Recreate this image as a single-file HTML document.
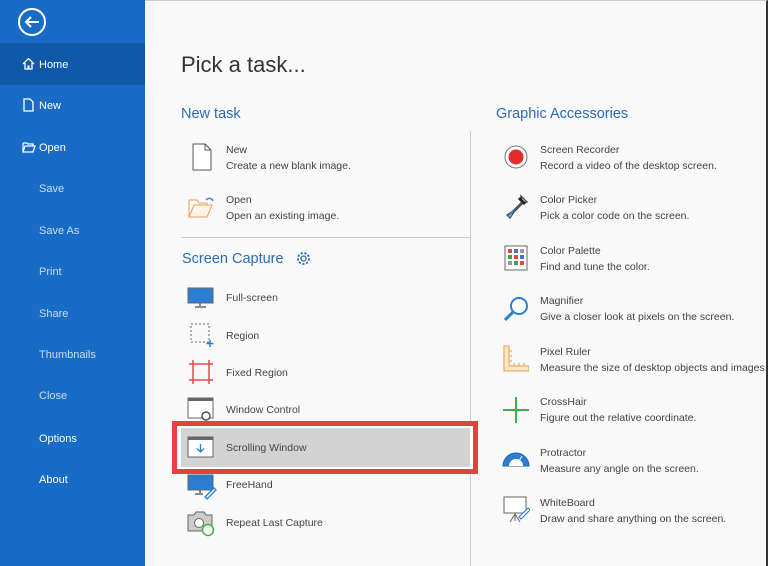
<!DOCTYPE html>
<html><head><style>
*{margin:0;padding:0;box-sizing:border-box}
body{width:768px;height:566px;overflow:hidden;background:#fff;font-family:"Liberation Sans",sans-serif;position:relative}
.side{position:absolute;left:0;top:0;width:145px;height:566px;background:#196cc6;color:#fff}
.side .it{position:absolute;left:39px;font-size:11px;color:#fff}
.side .dim{color:#c8dcf2}
.main{position:absolute;left:145px;top:0;width:623px;height:566px;background:#f9f9f9;border-top:1px solid #ccc;border-right:2px solid #333}
.t{position:absolute;font-size:10.5px;color:#444;white-space:nowrap}
.h{position:absolute;font-size:14.5px;color:#2b6cb3}
.ic{position:absolute}
</style></head><body>
<div class="side">
<svg class="ic" style="left:17px;top:7px" width="30" height="30"><circle cx="15" cy="15" r="13" fill="none" stroke="#fff" stroke-width="2"/><path d="M22 15H9M14 10l-5 5 5 5" fill="none" stroke="#fff" stroke-width="2"/></svg>
<div style="position:absolute;left:0;top:43px;width:145px;height:42px;background:#0f59a8"></div>
<svg class="ic" style="left:22px;top:57px" width="13" height="13"><path d="M1 7L6.5 1.5 12 7M3 6v6h3V9h1v3h3V6" fill="none" stroke="#fff" stroke-width="1.3"/></svg>
<div class="it" style="top:59px">Home</div>
<svg class="ic" style="left:23px;top:98px" width="11" height="14"><path d="M1 1h6l3 3v9H1z" fill="none" stroke="#fff" stroke-width="1.3"/></svg>
<div class="it" style="top:100px">New</div>
<svg class="ic" style="left:22px;top:141px" width="14" height="12"><path d="M1 2h4l1 1h5v2M1 2v9h10l2-6H3L1 11" fill="none" stroke="#fff" stroke-width="1.2"/></svg>
<div class="it" style="top:142px">Open</div>
<div class="it dim" style="top:183px">Save</div>
<div class="it dim" style="top:225px">Save As</div>
<div class="it dim" style="top:266px">Print</div>
<div class="it dim" style="top:308px">Share</div>
<div class="it dim" style="top:349px">Thumbnails</div>
<div class="it dim" style="top:390px">Close</div>
<div class="it" style="top:433px">Options</div>
<div class="it" style="top:474px">About</div>
</div>
<div class="main"></div>
<div class="t" style="left:181px;top:52px;font-size:22px;color:#333">Pick a task...</div>
<div class="h" style="left:181px;top:106px">New task</div>
<div class="h" style="left:496px;top:106px">Graphic Accessories</div>
<div style="position:absolute;left:470px;top:131px;width:1px;height:435px;background:#ccc"></div>
<div style="position:absolute;left:181px;top:237px;width:289px;height:1px;background:#ccc"></div>
<svg class="ic" style="left:192px;top:143px" width="20" height="28"><path d="M1 1h12l6 6v20H1z M13 1v6h6" fill="#fff" stroke="#555"/></svg>
<div class="t" style="left:226px;top:144px">New</div><div class="t" style="left:226px;top:160px">Create a new blank image.</div>
<svg class="ic" style="left:187px;top:194px" width="28" height="26"><path d="M2 6h8l2 3h8v2M2 6v17h18l5-12H7L2 23" fill="#fdf3e8" stroke="#e8a060"/><path d="M19 6a4 4 0 0 1 7 1" fill="none" stroke="#3a8ad8" stroke-width="1.5"/></svg>
<div class="t" style="left:226px;top:194px">Open</div><div class="t" style="left:226px;top:210px">Open an existing image.</div>
<div class="h" style="left:182px;top:251px">Screen Capture</div>
<svg class="ic" style="left:296px;top:251px" width="15" height="15"><circle cx="7.5" cy="7.5" r="2.5" fill="none" stroke="#2b6cb3" stroke-width="1.3"/><circle cx="7.5" cy="7.5" r="5.5" fill="none" stroke="#2b6cb3" stroke-width="1.8" stroke-dasharray="2.2 1.6"/></svg>
<svg class="ic" style="left:187px;top:287px" width="28" height="22"><rect x="1" y="1" width="25" height="15" fill="#2a7dd0" stroke="#666"/><path d="M13 16v3M8 20h11" stroke="#666" stroke-width="1.5"/></svg>
<div class="t" style="left:226px;top:292px">Full-screen</div>
<svg class="ic" style="left:189px;top:322px" width="26" height="26"><rect x="2" y="2" width="18" height="18" fill="none" stroke="#666" stroke-dasharray="2 2"/><path d="M21 18v7M17.5 21.5h7" stroke="#2a7dd0" stroke-width="1.5"/></svg>
<div class="t" style="left:226px;top:330px">Region</div>
<svg class="ic" style="left:188px;top:359px" width="26" height="26"><path d="M5 1v24M21 1v24M1 5h24M1 21h24" stroke="#e24a4a" stroke-width="1.5"/></svg>
<div class="t" style="left:226px;top:367px">Fixed Region</div>
<svg class="ic" style="left:187px;top:397px" width="28" height="26"><rect x="1" y="1" width="25" height="20" fill="#fff" stroke="#666"/><rect x="1" y="1" width="25" height="3" fill="#666"/><circle cx="19" cy="19" r="4" fill="#fff" stroke="#555" stroke-width="1.5"/></svg>
<div class="t" style="left:226px;top:404px">Window Control</div>
<div style="position:absolute;left:172px;top:421px;width:306px;height:53px;border:5px solid #e84040;background:#fff"></div>
<div style="position:absolute;left:181px;top:428px;width:289px;height:39px;background:#d4d3d3"></div>
<svg class="ic" style="left:187px;top:436px" width="28" height="24"><rect x="1" y="1" width="25" height="20" fill="#fff" stroke="#666"/><rect x="1" y="1" width="25" height="3" fill="#666"/><path d="M13.5 8v8M10 12.5l3.5 3.5 3.5-3.5" fill="none" stroke="#2a7dd0" stroke-width="1.3"/></svg>
<div class="t" style="left:226px;top:442px">Scrolling Window</div>
<svg class="ic" style="left:187px;top:474px" width="30" height="26"><rect x="1" y="1" width="25" height="15" fill="#2a7dd0" stroke="#666"/><path d="M13 16v3M8 20h8" stroke="#666" stroke-width="1.5"/><path d="M18 23l9-9 2 2-9 9z" fill="#fff" stroke="#2a7dd0" stroke-width="1.3"/></svg>
<div class="t" style="left:226px;top:479px">FreeHand</div>
<svg class="ic" style="left:187px;top:509px" width="30" height="28"><path d="M1 6h6l2-3h8l2 3h6v16H1z" fill="#ccc" stroke="#666"/><circle cx="12" cy="14" r="4.5" fill="#fff" stroke="#666"/><circle cx="21" cy="21" r="5.5" fill="#fff" stroke="#3cb050" stroke-width="1.5"/></svg>
<div class="t" style="left:226px;top:517px">Repeat Last Capture</div>

<svg class="ic" style="left:503px;top:144px" width="26" height="26"><circle cx="13" cy="13" r="11" fill="#fff" stroke="#777"/><circle cx="13" cy="13" r="7.5" fill="#e52b2b"/></svg>
<div class="t" style="left:540px;top:144px">Screen Recorder</div><div class="t" style="left:540px;top:160px">Record a video of the desktop screen.</div>
<svg class="ic" style="left:503px;top:194px" width="26" height="28"><path d="M18 2l6 6-4 1-9 9-4 6-3-3 6-4 9-9z" fill="#fff" stroke="#444" stroke-width="1.3"/><path d="M16 4l6 6" stroke="#222" stroke-width="3"/><path d="M5 22l6-6" stroke="#2a7dd0" stroke-width="2"/></svg>
<div class="t" style="left:540px;top:194px">Color Picker</div><div class="t" style="left:540px;top:210px">Pick a color code on the screen.</div>
<svg class="ic" style="left:504px;top:245px" width="24" height="26"><rect x="1" y="1" width="22" height="24" fill="#fff" stroke="#666"/><g fill="#e44"><rect x="4" y="4" width="4" height="4"/><rect x="10" y="4" width="4" height="4" fill="#47c"/><rect x="16" y="4" width="4" height="4" fill="#999"/><rect x="4" y="10" width="4" height="4" fill="#3a4"/><rect x="10" y="10" width="4" height="4"/><rect x="16" y="10" width="4" height="4" fill="#47c"/><rect x="4" y="16" width="4" height="4" fill="#999"/><rect x="10" y="16" width="4" height="4" fill="#3a4"/><rect x="16" y="16" width="4" height="4"/></g></svg>
<div class="t" style="left:540px;top:245px">Color Palette</div><div class="t" style="left:540px;top:261px">Find and tune the color.</div>
<svg class="ic" style="left:503px;top:295px" width="28" height="28"><circle cx="16" cy="11" r="8" fill="#fff" stroke="#2a7dd0" stroke-width="2"/><path d="M10 17l-8 8" stroke="#2a7dd0" stroke-width="3"/></svg>
<div class="t" style="left:540px;top:295px">Magnifier</div><div class="t" style="left:540px;top:311px">Give a closer look at pixels on the screen.</div>
<svg class="ic" style="left:503px;top:345px" width="26" height="28"><path d="M1 1h5v20h20v5H1z" fill="#fde8c8" stroke="#e8a050"/><path d="M6 6h3M6 11h3M6 16h3M11 21v-3M16 21v-3M21 21v-3" stroke="#e8a050"/></svg>
<div class="t" style="left:540px;top:346px">Pixel Ruler</div><div class="t" style="left:540px;top:362px">Measure the size of desktop objects and images.</div>
<svg class="ic" style="left:503px;top:396px" width="26" height="28"><path d="M13 1v26M0 14h26" stroke="#3cb050" stroke-width="2"/></svg>
<div class="t" style="left:540px;top:396px">CrossHair</div><div class="t" style="left:540px;top:412px">Figure out the relative coordinate.</div>
<svg class="ic" style="left:501px;top:448px" width="30" height="22"><path d="M2 18a13 13 0 0 1 26 0z" fill="#2a7dd0" stroke="#2068b8"/><path d="M8 18a7 7 0 0 1 14 0z" fill="#fff"/><path d="M15 18l6-10" stroke="#fff"/></svg>
<div class="t" style="left:540px;top:447px">Protractor</div><div class="t" style="left:540px;top:463px">Measure any angle on the screen.</div>
<svg class="ic" style="left:502px;top:495px" width="28" height="30"><rect x="2" y="2" width="22" height="16" fill="#fff" stroke="#666"/><path d="M13 18v8M8 27l5-8 5 8" stroke="#666" fill="none"/><path d="M17 22l9-9 2 2-9 9z" fill="#fff" stroke="#2a7dd0"/></svg>
<div class="t" style="left:540px;top:497px">WhiteBoard</div><div class="t" style="left:540px;top:513px">Draw and share anything on the screen.</div>
</body></html>
